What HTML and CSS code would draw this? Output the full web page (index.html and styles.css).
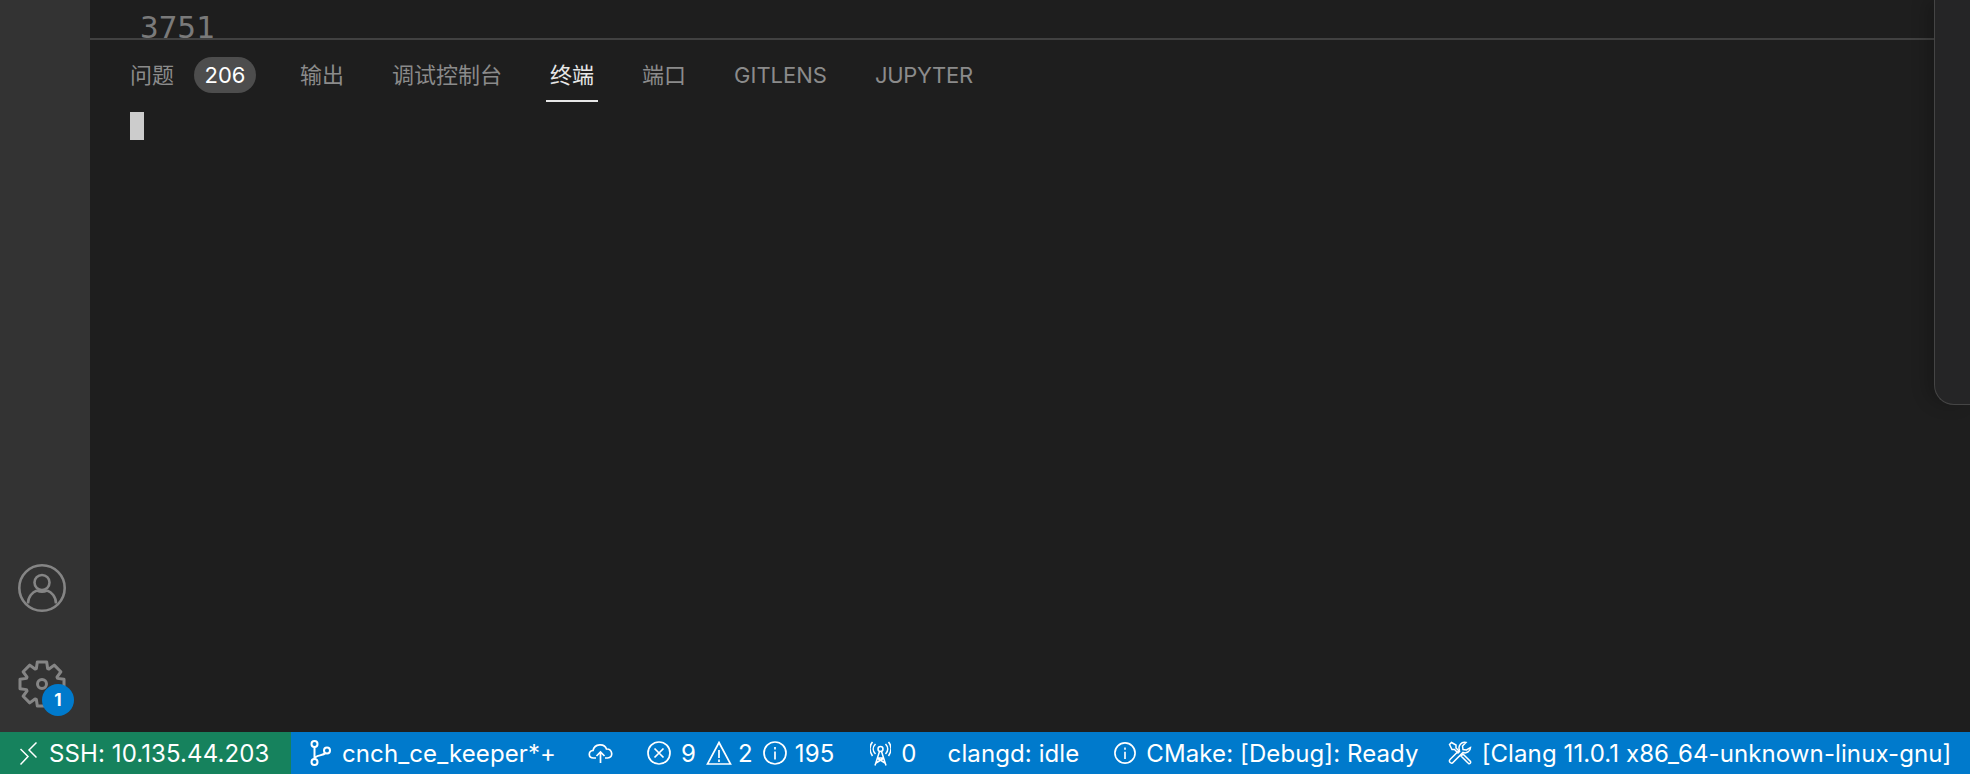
FILE: index.html
```html
<!DOCTYPE html>
<html lang="zh">
<head>
<meta charset="utf-8">
<title>Terminal</title>
<link rel="stylesheet" href="styles.css">
</head>
<body>
<div class="workbench">
  <div class="main">
    <aside class="activity">
      <svg class="act-icon" viewBox="0 0 48 48" width="48" height="48"><g fill="none" stroke="#858585" stroke-width="2.600"><circle cx="24" cy="24" r="22.700"/><circle cx="24" cy="18.500" r="7.500"/><path d="M10 39.500c0-7 4.500-11.500 9-13M38 39.500c0-7-4.500-11.500-9-13M19 26.500c3 1.500 7 1.500 10 0"/></g></svg>
      <div class="gear-wrap">
        <svg class="act-icon" viewBox="0 0 48 48" width="48" height="48"><g fill="none" stroke="#858585" stroke-width="3" stroke-linejoin="round"><path d="M18.360 8.500 19.320 2h9.360l.96 6.500 1.330.55 5.290-3.920 6.610 6.610-3.920 5.290.55 1.330 6.500.96v9.360l-6.500.96-.55 1.330 3.920 5.290-6.610 6.610-5.290-3.920-1.330.55-.96 6.500h-9.360l-.96-6.500-1.330-.55-5.290 3.920-6.610-6.610 3.920-5.290-.55-1.330L2 28.680v-9.360l6.500-.96.55-1.330-3.920-5.290 6.610-6.610 5.290 3.920z"/><circle cx="24" cy="24" r="4.500"/></g></svg>
        <span class="badge">1</span>
      </div>
    </aside>
    <section class="content">
      <div class="editor-tail"><span class="line-no">3751</span></div>
      <nav class="tabs">
        <div class="tab first">问题</div>
        <div class="count">206</div>
        <div class="tab">输出</div>
        <div class="tab">调试控制台</div>
        <div class="tab active">终端</div>
        <div class="tab">端口</div>
        <div class="tab">GITLENS</div>
        <div class="tab tight">JUPYTER</div>
      </nav>
      <div class="terminal"><span class="cursor"></span></div>
      <div class="overlay"></div>
    </section>
  </div>
  <footer class="status">
    <div class="item remote">
      <svg viewBox="0 0 17 23" width="17" height="23"><path d="M.5 7 8 14.500.5 22.500M16.500.5 9 8l7.500 7.500" fill="none" stroke="#fff" stroke-width="1.500"/></svg>
      <span>SSH: 10.135.44.203</span>
    </div>
    <div class="item branch">
      <svg viewBox="0 0 21 26" width="21" height="26"><g fill="none" stroke="#fff" stroke-width="2"><circle cx="4.500" cy="4" r="3"/><circle cx="4.500" cy="22" r="3"/><circle cx="17" cy="10.500" r="3"/><path d="M4.500 7v12M4.500 19c0-4 8.500-3 11-6"/></g></svg>
      <span>cnch_ce_keeper*+</span>
    </div>
    <div class="item cloud">
      <svg viewBox="0 0 25 20" width="25" height="20"><g fill="none" stroke="#fff" stroke-width="1.700"><path d="M8 15H5.500C0 15 0 8 5 7.500 6.500 .5 16.500 0 18.500 6c6-.5 7.500 9 1 9H17"/><path d="M12.500 20V9M8.500 13l4-4 4 4"/></g></svg>
    </div>
    <div class="item problems">
      <svg viewBox="0 0 24 24" width="24" height="24"><g fill="none" stroke="#fff" stroke-width="1.700"><circle cx="12" cy="12" r="11"/><path d="M7.500 7.500l9 9M16.500 7.500l-9 9"/></g></svg>
      <span>9</span>
      <svg viewBox="0 0 26 24" width="26" height="24"><g fill="none" stroke="#fff" stroke-width="1.700"><path d="M13 1.500 24.500 23h-23z"/><path d="M13 9v8M13 18.500v2.500"/></g></svg>
      <span class="pull-warn">2</span>
      <svg viewBox="0 0 24 24" width="24" height="24"><g fill="none" stroke="#fff" stroke-width="1.700"><circle cx="12" cy="12" r="11"/><path d="M12 10.500v8M12 6v2.500"/></g></svg>
      <span class="pull-info">195</span>
    </div>
    <div class="item ports">
      <svg viewBox="0 0 21 25" width="21" height="25"><g fill="none" stroke="#fff" stroke-width="1.500"><circle cx="10.500" cy="8" r="2.500"/><path d="M9.500 10.500 5 24.500M11.500 10.500 16 24.500M7.500 17h6M6 22l8-5M15 22l-8-5"/><path d="M5.500 13c-3-3-3-7 0-10M15.500 13c3-3 3-7 0-10M2.500 15C-.8 10-.8 5 2.500 1M18.500 15c3.300-5 3.300-10 0-14"/></g></svg>
      <span>0</span>
    </div>
    <div class="item clangd"><span>clangd: idle</span></div>
    <div class="item cmake">
      <svg viewBox="0 0 24 24" width="22" height="22"><g fill="none" stroke="#fff" stroke-width="1.800"><circle cx="12" cy="12" r="11"/><path d="M12 10.500v8M12 6v2.500"/></g></svg>
      <span>CMake: [Debug]: Ready</span>
    </div>
    <div class="item kit">
      <svg viewBox="0 0 24 24" width="24" height="24"><g fill="none" stroke="#fff" stroke-width="1.500"><path d="M1.500 3.500 3.500 1.500 8 4v3l3.500 3.500-1.500 1.500L6.500 8.500H4zM13 15l2-2 7.500 7.500a1.500 1.500 0 0 1-2 2z"/><path d="M22.500 6.500a5.500 5.500 0 0 1-7.500 5L5 21.500c-1.500 2-5-1-3-3l9.500-9.500a5.500 5.500 0 0 1 6.500-7.500l-3.500 3.500.5 3.500 3.500.5z"/></g></svg>
      <span>[Clang 11.0.1 x86_64-unknown-linux-gnu]</span>
    </div>
  </footer>
</div>
</body>
</html>
```

FILE: styles.css
```css
* { box-sizing: border-box; }
html, body { margin: 0; height: 100%; overflow: hidden; background: #1e1e1e; }
body { font-family: Inter, "Noto Sans CJK SC", sans-serif; font-feature-settings: "calt" 0; }
.workbench { height: 774px; display: flex; flex-direction: column; }
.main { flex: 1; display: flex; min-height: 0; }
.activity { width: 90px; background: #333333; display: flex; flex-direction: column; justify-content: flex-end; padding: 0 0 24px 18px; gap: 48px; flex: none; }
.act-icon { display: block; }
.gear-wrap { position: relative; width: 48px; height: 48px; }
.badge { position: absolute; left: 24px; top: 24px; width: 32px; height: 32px; border-radius: 50%; background: #007acc; color: #fff; font-size: 17px; font-weight: 700; display: flex; align-items: center; justify-content: center; }
.content { flex: 1; position: relative; min-width: 0; background: #1e1e1e; }
.editor-tail { height: 40px; border-bottom: 2px solid #414141; overflow: hidden; padding-left: 50px; }
.line-no { display: block; font-family: "DejaVu Sans Mono", monospace; font-size: 31px; line-height: 36px; padding-top: 9px; color: #7a7a7a; }
.tabs { display: flex; align-items: center; height: 70px; padding-left: 40px; font-size: 22px; color: #8b8b8b; }
.tab { position: relative; margin-right: 48px; line-height: 40px; white-space: nowrap; }
.tab.first { margin-right: 20px; }
.tab.tight { letter-spacing: -.3px; }
.tab.active { color: #e7e7e7; }
.tab.active::after { content: ""; position: absolute; left: -4px; right: -4px; bottom: -7px; height: 2px; background: #e7e7e7; }
.count { width: 62px; height: 36px; margin-right: 44px; border-radius: 18px; background: #4d4d4d; color: #fff; display: flex; align-items: center; justify-content: center; }
.terminal { padding: 2px 0 0 40px; }
.cursor { display: block; width: 14px; height: 28px; background: #cccccc; }
.overlay { position: absolute; top: 0; right: 0; width: 36px; height: 405px; background: #252526; border: 1px solid #454545; border-right: 0; border-top: 0; border-bottom-left-radius: 20px; box-shadow: -8px 0 16px rgba(0,0,0,.18); }
.status { height: 42px; flex: none; background: #007acc; color: #fff; display: flex; align-items: center; font-size: 24px; letter-spacing: .1px; white-space: nowrap; }
.item { height: 100%; display: flex; align-items: center; }
.item svg { flex: none; display: block; }
.remote { width: 291px; background: #16825d; padding-left: 20px; gap: 12px; }
.branch { margin-left: 19px; gap: 11px; }
.cloud { margin-left: 32px; }
.problems { margin-left: 34px; gap: 10px; }
.pull-warn { margin-left: -4px; }
.pull-info { margin-left: -2px; }
.ports { margin-left: 36px; gap: 10px; }
.clangd { margin-left: 31px; }
.cmake { margin-left: 35px; gap: 10px; }
.kit { margin-left: 29px; gap: 10px; }
```
